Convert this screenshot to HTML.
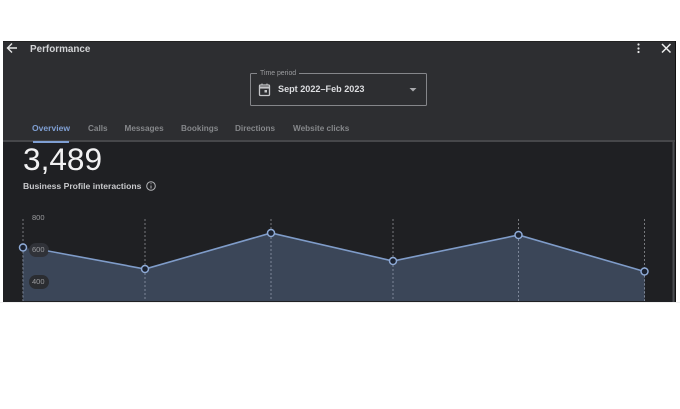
<!DOCTYPE html>
<html>
<head>
<meta charset="utf-8">
<style>
html,body{margin:0;padding:0;background:#fff;width:680px;height:409px;overflow:hidden}
body{position:relative;font-family:"Liberation Sans",sans-serif}
.a{position:absolute;white-space:nowrap}
#wrap{position:absolute;left:0;top:0;width:680px;height:409px;filter:blur(.35px)}
#panel{position:absolute;left:3px;top:41px;width:673px;height:261px;background:#1f2023;overflow:hidden;border-top:1px solid #222;box-sizing:border-box}
#head{position:absolute;left:3px;top:42px;width:673px;height:100px;background:#2d2e31;border-bottom:2px solid #46474a;box-sizing:border-box}
.tab{font-size:8.200px;font-weight:bold;color:#85878a;top:123px;line-height:11px}
.ax{font-size:7.500px;color:#9a9b9e;line-height:10px}
</style>
</head>
<body>
<div id="wrap">
<div id="panel"></div>
<div id="head"></div>
<svg class="a" style="left:0;top:0" width="680" height="409">
  <path d="M17 48H7.500M12 43.500L7.500 48l4.500 4.500" fill="none" stroke="#e8e8e8" stroke-width="1.400"/>
  <circle cx="638.500" cy="44.500" r="1.100" fill="#e8e8e8"/><circle cx="638.500" cy="48.500" r="1.100" fill="#e8e8e8"/><circle cx="638.500" cy="52" r="1.100" fill="#e8e8e8"/>
  <path d="M662 44l8.500 8.500M670.500 44L662 52.500" stroke="#eee" stroke-width="1.500" fill="none"/>
  <path d="M257 73.500H251.500a1 1 0 0 0-1 1V104.500a1 1 0 0 0 1 1H425.500a1 1 0 0 0 1-1V74.500a1 1 0 0 0-1-1H299" fill="none" stroke="#85868a" stroke-width="1"/>
  <rect x="259.500" y="85" width="10" height="10.500" rx="1" fill="none" stroke="#c4c5c8" stroke-width="1.300"/>
  <path d="M259.500 87.500h10" stroke="#c4c5c8" stroke-width="2.200"/>
  <path d="M262 83.500v2M267 83.500v2" stroke="#c4c5c8" stroke-width="1"/>
  <rect x="264.500" y="90" width="2.500" height="2.500" fill="#c4c5c8"/>
  <path d="M409.500 88h7l-3.500 3.500z" fill="#a9aaad"/>
  <rect x="33" y="141" width="36" height="2" fill="#7f9fd3"/>
  <rect x="672.500" y="142" width="2" height="160" fill="#4a4b4f"/>
  <rect x="675" y="41" width="1" height="261" fill="#111"/>
  <path d="M23 219V302M145 219V302M271 219V302M393 219V302M518.500 219V302M644.500 219V302" stroke="#77797d" stroke-width="1" stroke-dasharray="2 2" fill="none"/>
  <path d="M23 247.500L145 269L271 233L393 261L518.500 235L644.500 271.500V301H23Z" fill="#3b4658"/>
  <path d="M145 269V301M271 233V301M393 261V301M518.500 235V301M644.500 271.500V301M23 247.500V301" stroke="#7c8698" stroke-width="1" stroke-dasharray="2 2" fill="none"/>
  <rect x="29" y="243" width="20" height="14" rx="7" fill="#303238"/>
  <rect x="29" y="275" width="20" height="14" rx="7" fill="#2b2d31"/>
  <path d="M48 251L145 269L271 233L393 261L518.500 235L644.500 271.500" fill="none" stroke="#7f9cc9" stroke-width="1.600"/>
  <g fill="#1b2230" stroke="#8eaad6" stroke-width="1.500">
    <circle cx="23" cy="247.500" r="3.500"/><circle cx="145" cy="269" r="3.500"/><circle cx="271" cy="233" r="3.500"/><circle cx="393" cy="261" r="3.500"/><circle cx="518.500" cy="235" r="3.500"/><circle cx="644.500" cy="271.500" r="3.500"/>
  </g>
  <circle cx="151" cy="186" r="4.300" fill="none" stroke="#b4b5b8" stroke-width="1"/>
  <path d="M151 185.500v3M151 183.300v1" stroke="#b4b5b8" stroke-width="1"/>
  <rect x="0" y="302" width="680" height="1" fill="#f0f0f0"/>
</svg>
<div class="a" style="left:30px;top:42.500px;font-size:9.900px;font-weight:bold;color:#d3d4d6;line-height:13px">Performance</div>
<div class="a" style="left:260px;top:69px;font-size:6.900px;color:#9c9da0;line-height:9px">Time period</div>
<div class="a" style="left:278px;top:83px;font-size:9.100px;font-weight:bold;color:#dcdde0;line-height:12px">Sept 2022–Feb 2023</div>
<div class="a tab" style="left:32px;color:#7f9fd3;font-size:8.550px">Overview</div>
<div class="a tab" style="left:88px">Calls</div>
<div class="a tab" style="left:124.500px">Messages</div>
<div class="a tab" style="left:181px">Bookings</div>
<div class="a tab" style="left:235px">Directions</div>
<div class="a tab" style="left:293px">Website clicks</div>
<div class="a" style="left:23px;top:142px;font-size:31.600px;color:#f2f2f3;line-height:34px">3,489</div>
<div class="a" style="left:23px;top:180px;font-size:8.600px;font-weight:bold;color:#c9cacd;line-height:12px">Business Profile interactions</div>
<div class="a ax" style="left:32px;top:213px">800</div>
<div class="a ax" style="left:32px;top:245px">600</div>
<div class="a ax" style="left:32px;top:277px">400</div>
</div>
</body>
</html>
